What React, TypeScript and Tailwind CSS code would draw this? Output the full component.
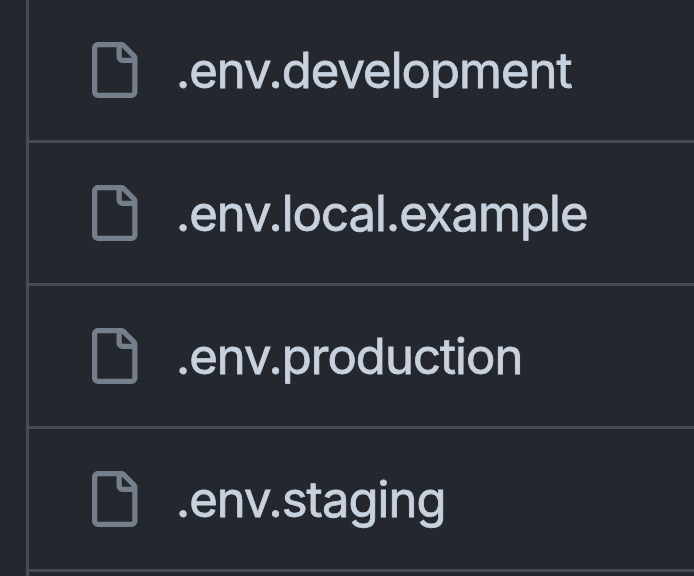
const files = [
  ".env.development",
  ".env.local.example",
  ".env.production",
  ".env.staging",
]

function FileIcon() {
  return (
    <svg viewBox="0 0 16 16" className="size-14 shrink-0 fill-[#757f8b]" aria-hidden="true">
      <path d="M2 1.75C2 .784 2.784 0 3.75 0h6.586c.464 0 .909.184 1.237.513l2.914 2.914c.329.328.513.773.513 1.237v9.586A1.75 1.75 0 0 1 13.25 16h-9.5A1.75 1.75 0 0 1 2 14.25Zm1.75-.25a.25.25 0 0 0-.25.25v12.5c0 .138.112.25.25.25h9.5a.25.25 0 0 0 .25-.25V6h-2.75A1.75 1.75 0 0 1 9 4.25V1.5Zm6.75.062V4.25c0 .138.112.25.25.25h2.688l-.011-.013-2.914-2.914-.013-.011Z" />
    </svg>
  )
}

export default function App() {
  return (
    <div className="h-screen overflow-hidden bg-[#24272e] pl-[26px]">
      <ul className="h-full border-l-3 border-[#464c55]">
        {files.map((name) => (
          <li key={name} className="flex h-[143px] items-center border-b-3 border-[#464c55] pl-14">
            <FileIcon />
            <span className="ml-[35px] font-['Inter',sans-serif] text-[49px] leading-none tracking-[-0.95px] text-[#c8d2df] [-webkit-text-stroke:0.8px_#c8d2df]">
              {name}
            </span>
          </li>
        ))}
      </ul>
    </div>
  )
}
